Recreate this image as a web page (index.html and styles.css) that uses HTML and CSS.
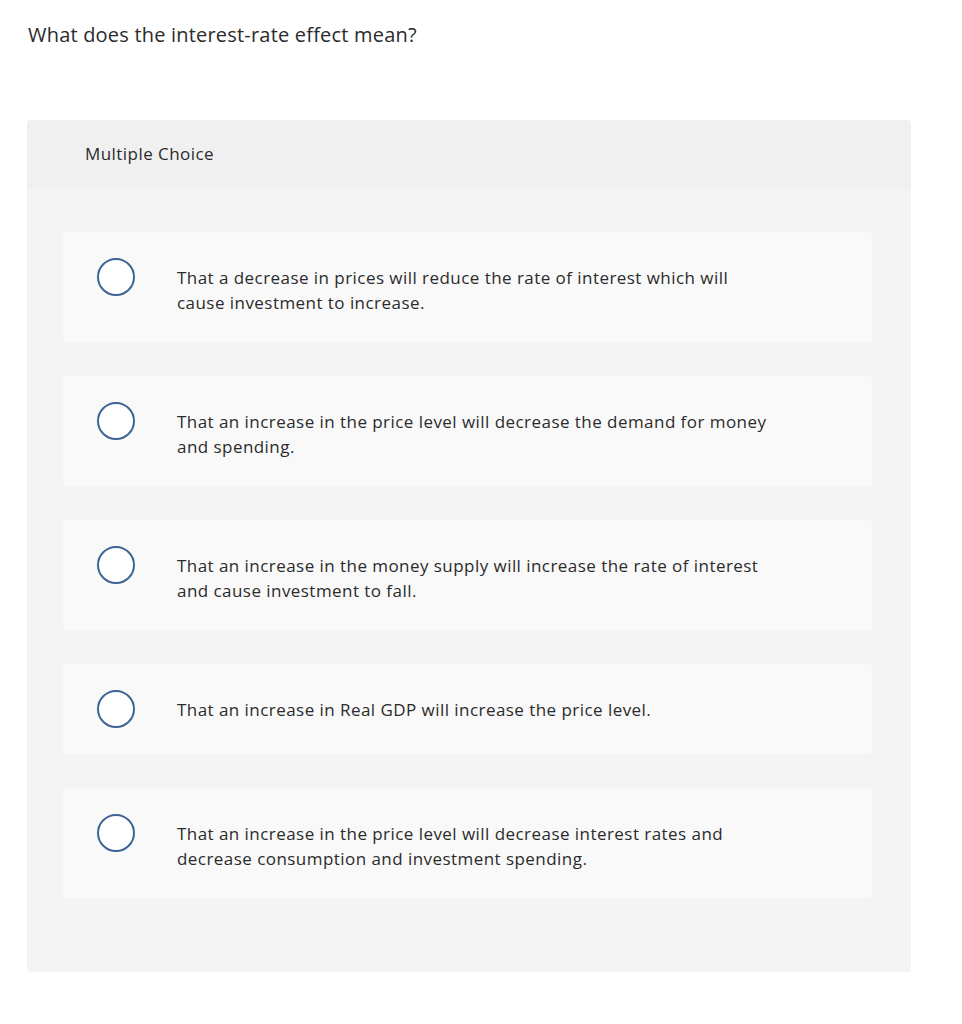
FILE: index.html
```html
<!DOCTYPE html>
<html>
<head>
<meta charset="utf-8">
<link rel="stylesheet" href="styles.css">
</head>
<body>
<div class="page">
  <p class="question">What does the interest-rate effect mean?</p>
  <div class="panel">
    <div class="panel-head">Multiple Choice</div>
    <div class="panel-body">
      <div class="option"><span class="radio"></span><div class="label">That a decrease in prices will reduce the rate of interest which will cause investment to increase.</div></div>
      <div class="option"><span class="radio"></span><div class="label">That an increase in the price level will decrease the demand for money and spending.</div></div>
      <div class="option"><span class="radio"></span><div class="label">That an increase in the money supply will increase the rate of interest and cause investment to fall.</div></div>
      <div class="option"><span class="radio"></span><div class="label">That an increase in Real GDP will increase the price level.</div></div>
      <div class="option"><span class="radio"></span><div class="label">That an increase in the price level will decrease interest rates and decrease consumption and investment spending.</div></div>
    </div>
  </div>
</div>
</body>
</html>
```
FILE: styles.css
```css
html, body { margin: 0; padding: 0; background: #fff; }
body { font-family: "Open Sans", "Liberation Sans", sans-serif; color: #2b2b2b; }
.page { padding: 22px 51px 0 27px; }
.question { margin: 0 0 0 1px; font-size: 20px; line-height: 26px; letter-spacing: 0.2px; color: #2b2b2b; }
.panel { margin-top: 72px; width: 884px; background: #f4f4f4; border-radius: 4px; overflow: hidden; }
.panel-head { background: #f0f0f0; height: 69px; box-sizing: border-box; padding: 22px 0 0 58px; font-size: 17px; line-height: 24px; letter-spacing: 0.45px; }
.panel-body { padding: 43px 39px 74px 36px; display: flex; flex-direction: column; gap: 34px; }
.option { background: #f9f9f9; border-radius: 3px; display: flex; align-items: flex-start; padding: 26px 40px 26px 34px; }
.radio { flex: none; width: 34px; height: 34px; border: 2px solid #3d6595; border-radius: 50%; background: #fff; }
.label { margin: 7px 0 1px 42px; font-size: 17px; line-height: 25px; letter-spacing: 0.45px; max-width: 596px; color: #2b2b2b; }
```
